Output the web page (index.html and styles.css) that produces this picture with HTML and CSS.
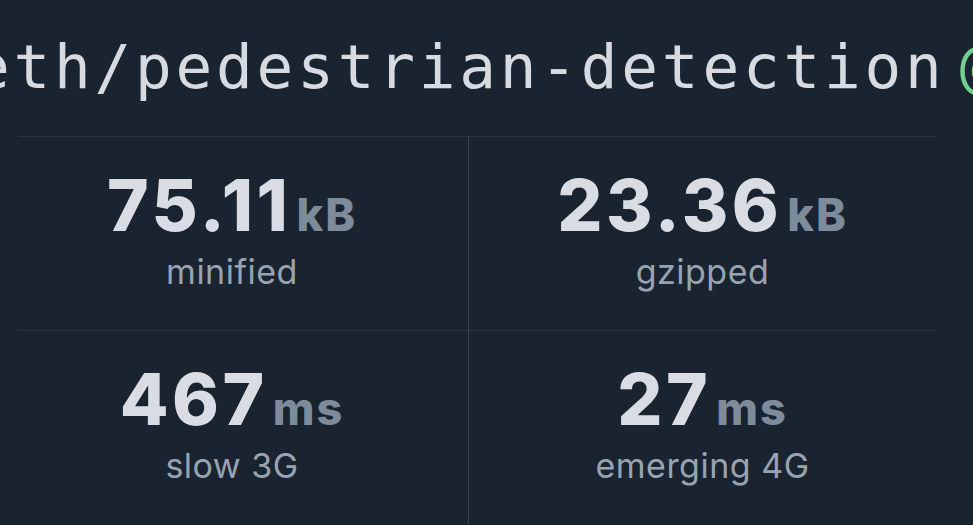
FILE: index.html
```html
<!DOCTYPE html>
<html lang="en">
<head>
<meta charset="utf-8">
<title>@kenneth/pedestrian-detection - Bundle size</title>
<link rel="stylesheet" href="styles.css">
</head>
<body>
<main class="page">
  <h1 class="title"><span class="name">@kenneth/pedestrian-detection</span><span class="version">@1.0.0</span></h1>
  <section class="stats">
    <div class="stat stat-left">
      <div class="value">75.11<span class="unit">kB</span></div>
      <div class="label">minified</div>
    </div>
    <div class="stat stat-right">
      <div class="value">23.36<span class="unit">kB</span></div>
      <div class="label">gzipped</div>
    </div>
    <div class="stat stat-left">
      <div class="value">467<span class="unit">ms</span></div>
      <div class="label">slow 3G</div>
    </div>
    <div class="stat stat-right">
      <div class="value">27<span class="unit">ms</span></div>
      <div class="label">emerging 4G</div>
    </div>
  </section>
</main>
</body>
</html>
```
FILE: styles.css
```css
html, body {
  margin: 0;
  padding: 0;
  background: #1a2330;
  overflow: hidden;
}

.page {
  width: 973px;
  height: 525px;
  display: flex;
  flex-direction: column;
  align-items: center;
}

.title {
  margin: 0;
  padding: 36px 0 39px;
  font-family: "DejaVu Sans Mono", monospace;
  font-weight: 400;
  font-size: 61px;
  line-height: 61px;
  letter-spacing: 3.8px;
  color: #d7dbe1;
  white-space: nowrap;
  display: flex;
  justify-content: center;
  width: 973px;
}

.version {
  color: #6fcf8c;
  margin-left: 14px;
}

.stats {
  align-self: flex-start;
  margin-left: 18px;
  display: grid;
  grid-template-columns: 450px 468px;
  font-family: Inter, "Noto Sans", sans-serif;
}

.stat {
  border-top: 1px solid #2a3541;
  padding: 33px 0 40px;
  display: flex;
  flex-direction: column;
  align-items: center;
}

.stat-left {
  padding-right: 22px;
}

.stat-right {
  border-left: 1px solid #38434f;
}

.value {
  font-size: 71px;
  line-height: 71px;
  font-weight: 800;
  color: #d9dde3;
  letter-spacing: 3.5px;
  white-space: nowrap;
}

.unit {
  font-size: 45px;
  font-weight: 800;
  color: #7e8b9b;
  margin-left: 5px;
  letter-spacing: 2px;
}

.label {
  margin-top: 4px;
  font-size: 34px;
  line-height: 36px;
  font-weight: 400;
  color: #98a3b1;
  letter-spacing: 0.5px;
  white-space: nowrap;
}
```
